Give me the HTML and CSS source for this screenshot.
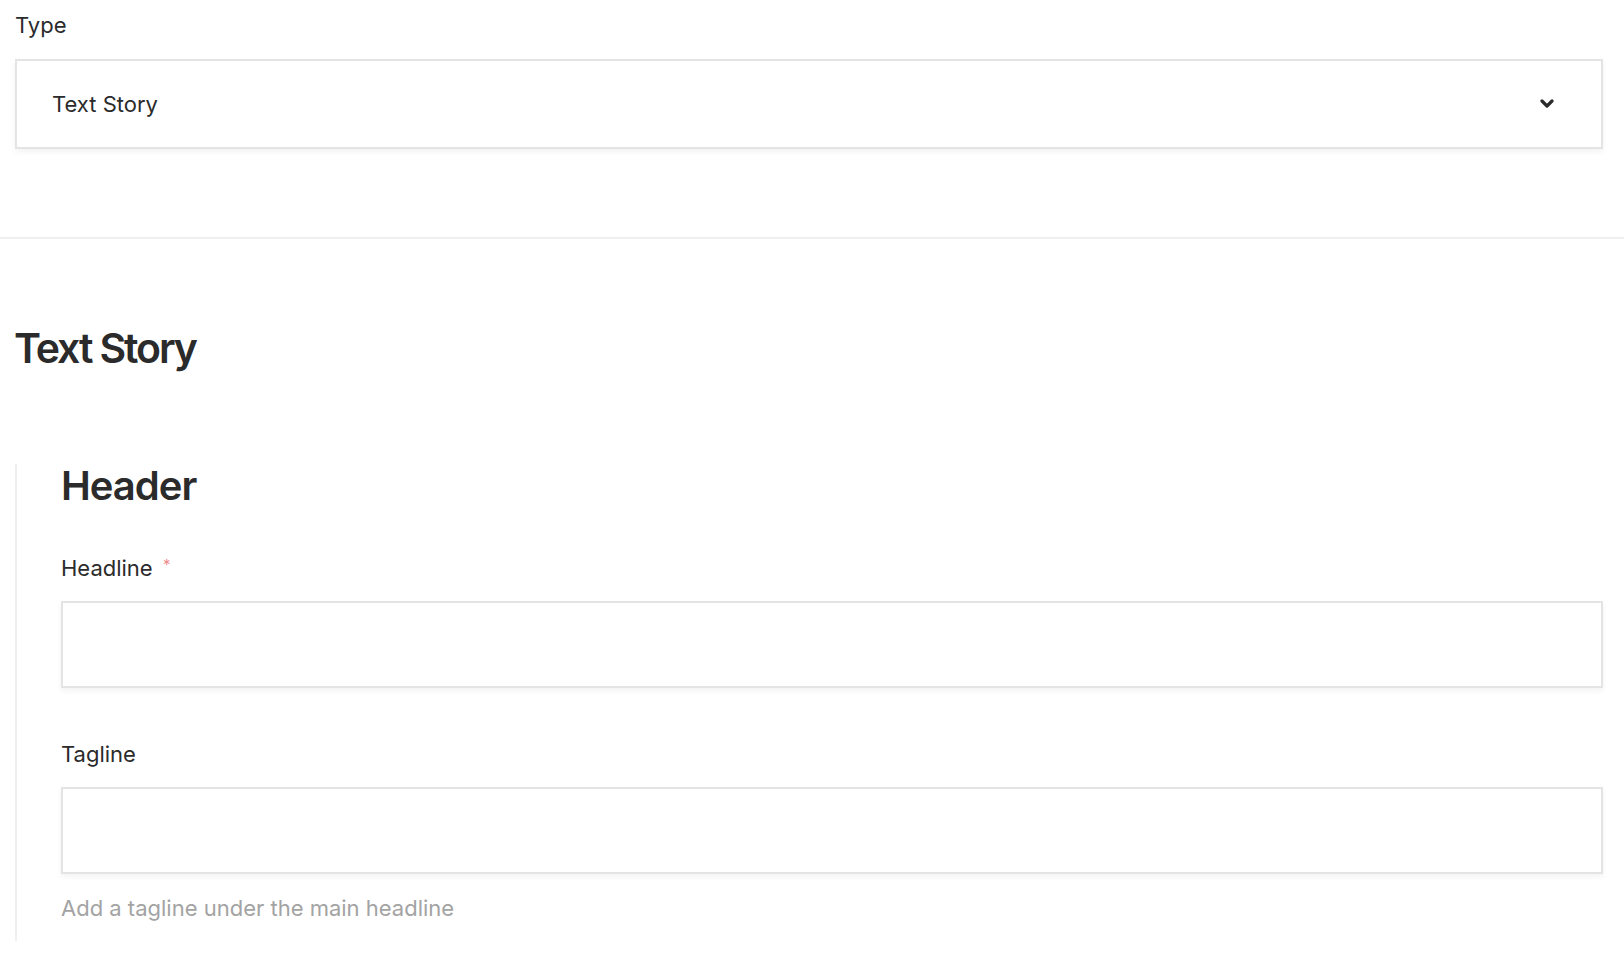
FILE: index.html
```html
<!DOCTYPE html>
<html lang="en">
<head>
<meta charset="utf-8">
<title>Text Story</title>
<link rel="stylesheet" href="styles.css">
</head>
<body>
<section class="type-section">
  <label class="field-label">Type</label>
  <div class="select-box">
    <span class="select-value">Text Story</span>
    <svg class="chevron" width="14" height="10" viewBox="0 0 14 10" aria-hidden="true">
      <polyline points="2,2 7,7 12,2" fill="none" stroke="#2b2b2b" stroke-width="3.2" stroke-linecap="round" stroke-linejoin="round"/>
    </svg>
  </div>
</section>
<hr class="divider">
<section class="story-section">
  <h2 class="story-title">Text Story</h2>
  <div class="group">
    <h3 class="group-title">Header</h3>
    <div class="field">
      <label class="field-label">Headline <span class="required">*</span></label>
      <div class="input-box"></div>
    </div>
    <div class="field field-second">
      <label class="field-label">Tagline</label>
      <div class="input-box"></div>
      <p class="help-text">Add a tagline under the main headline</p>
    </div>
  </div>
</section>
</body>
</html>
```
FILE: styles.css
```css
html, body {
  margin: 0;
  padding: 0;
  background: #ffffff;
}

body {
  font-family: Inter, "Noto Sans", "Liberation Sans", sans-serif;
  color: #2b2b2b;
  -webkit-font-smoothing: antialiased;
}

.type-section {
  padding: 13px 21px 88px 15px;
}

.field-label {
  display: block;
  font-size: 22px;
  line-height: 24px;
  color: #2b2b2b;
}

.required {
  color: #f08a8a;
  font-size: 15px;
  vertical-align: top;
  margin-left: 4px;
  position: relative;
  top: -3px;
}

.select-box {
  margin-top: 22px;
  height: 90px;
  box-sizing: border-box;
  border: 2px solid #e4e4e4;
  box-shadow: 0 3px 6px rgba(0, 0, 0, 0.05);
  display: flex;
  align-items: center;
  justify-content: space-between;
  padding: 0 47px 0 35px;
}

.select-value {
  font-size: 22px;
}

.chevron {
  display: block;
}

.divider {
  margin: 0;
  border: 0;
  height: 2px;
  background: #efefef;
}

.story-section {
  padding: 84px 21px 40px 14px;
}

.story-title {
  margin: 0;
  font-size: 41px;
  line-height: 50px;
  font-weight: 600;
  letter-spacing: -2.1px;
  color: #2b2b2b;
}

.group {
  margin-top: 91px;
  margin-left: 1px;
  border-left: 2px solid #efefef;
  padding: 0 0 21px 44px;
}

.group-title {
  margin: 0;
  font-size: 40px;
  line-height: 44px;
  font-weight: 600;
  letter-spacing: -1px;
  color: #2b2b2b;
}

.field {
  margin-top: 48px;
}

.field-second {
  margin-top: 54px;
}

.input-box {
  margin-top: 21px;
  height: 87px;
  box-sizing: border-box;
  border: 2px solid #e4e4e4;
  box-shadow: 0 3px 6px rgba(0, 0, 0, 0.05);
  background: #fff;
}

.help-text {
  margin: 22px 0 0;
  font-size: 22px;
  line-height: 24px;
  color: #a3a3a3;
}
```
